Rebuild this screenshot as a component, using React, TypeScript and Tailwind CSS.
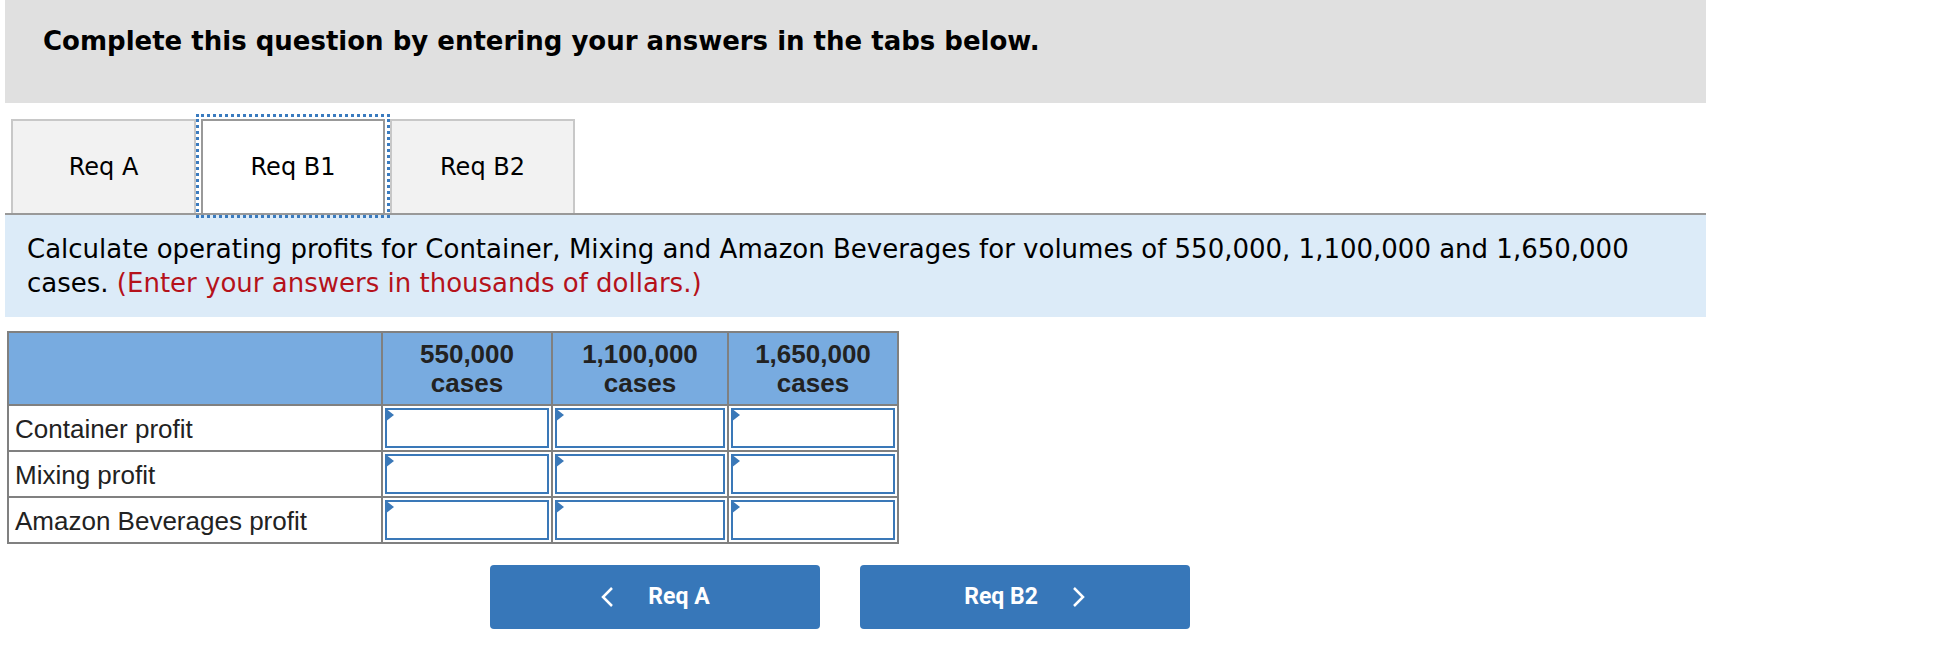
const verdana = { fontFamily: '"DejaVu Sans", Verdana, sans-serif' };

const cols = ["550,000", "1,100,000", "1,650,000"];
const rows = ["Container profit", "Mixing profit", "Amazon Beverages profit"];

function InputCell() {
  return (
    <td className="border-2 border-[#808080] p-[2px] align-top">
      <div className="relative h-[40px] border-2 border-[#3a78b8] bg-white">
        <span className="absolute left-[-2px] top-[-2px] h-0 w-0 border-y-[7px] border-l-[9px] border-y-transparent border-l-[#3a78b8]" />
      </div>
    </td>
  );
}

export default function App() {
  return (
    <div className="min-h-[660px] bg-white">
      <div className="ml-[5px] w-[1701px]">
        <div className="h-[103px] bg-[#e0e0e0] pl-[38px] pt-[25px]">
          <p className="text-[26px] font-bold leading-[32px] text-black" style={verdana}>
            Complete this question by entering your answers in the tabs below.
          </p>
        </div>

        <div className="mt-[16px] flex items-end border-b-2 border-[#999999] pl-[6px]" style={verdana}>
          <div className="flex h-[94px] w-[185px] items-center justify-center border-2 border-b-0 border-[#c8c8c8] bg-[#f2f2f2] text-[24px] text-black">
            Req A
          </div>
          <div className="relative z-10 mx-[5px] flex h-[94px] w-[184px] items-center justify-center border-2 border-b-0 border-[#999999] bg-white text-[24px] text-black outline-[3px] outline-offset-[2px] outline-dotted outline-[#3a7bbf]">
            Req B1
          </div>
          <div className="flex h-[94px] w-[185px] items-center justify-center border-2 border-b-0 border-[#c8c8c8] bg-[#f2f2f2] text-[24px] text-black">
            Req B2
          </div>
        </div>

        <div className="h-[102px] bg-[#dcebf8] pl-[22px] pr-[60px] pt-[17px]" style={verdana}>
          <p className="text-[26px] leading-[34px] text-black">
            Calculate operating profits for Container, Mixing and Amazon Beverages for volumes of 550,000, 1,100,000 and 1,650,000 cases.{" "}
            <span className="text-[#b5121b]">(Enter your answers in thousands of dollars.)</span>
          </p>
        </div>

        <table
          className="ml-[2px] mt-[14px] border-collapse border-2 border-[#808080]"
          style={{ fontFamily: '"Liberation Sans", Arial, sans-serif' }}
        >
          <thead>
            <tr className="h-[73px] bg-[#78abe0]">
              <th className="w-[374px] border-2 border-[#808080]" />
              {cols.map((c, i) => (
                <th
                  key={c}
                  className={`${i === 1 ? "w-[176px]" : "w-[170px]"} border-2 border-[#808080] text-center text-[26px] font-bold leading-[29px] text-[#222222]`}
                >
                  {c}
                  <br />
                  cases
                </th>
              ))}
            </tr>
          </thead>
          <tbody>
            {rows.map((r) => (
              <tr key={r} className="h-[46px]">
                <td className="border-2 border-[#808080] pl-[6px] pt-[2px] text-[26px] leading-[30px] text-[#222222]">{r}</td>
                <InputCell />
                <InputCell />
                <InputCell />
              </tr>
            ))}
          </tbody>
        </table>

        <div className="ml-[485px] mt-[21px] flex gap-[40px]" style={{ fontFamily: "Roboto, sans-serif" }}>
          <button className="flex h-[64px] w-[330px] items-center justify-center gap-[34px] rounded-[4px] bg-[#3777b9] text-[23px] font-bold text-white">
            <svg width="14" height="22" viewBox="0 0 14 22" fill="none" stroke="white" strokeWidth="2.5">
              <path d="M12 2 L3 11 L12 20" />
            </svg>
            <span>Req A</span>
          </button>
          <button className="flex h-[64px] w-[330px] items-center justify-center gap-[34px] rounded-[4px] bg-[#3777b9] text-[23px] font-bold text-white">
            <span>Req B2</span>
            <svg width="14" height="22" viewBox="0 0 14 22" fill="none" stroke="white" strokeWidth="2.5">
              <path d="M2 2 L11 11 L2 20" />
            </svg>
          </button>
        </div>
      </div>
    </div>
  );
}
